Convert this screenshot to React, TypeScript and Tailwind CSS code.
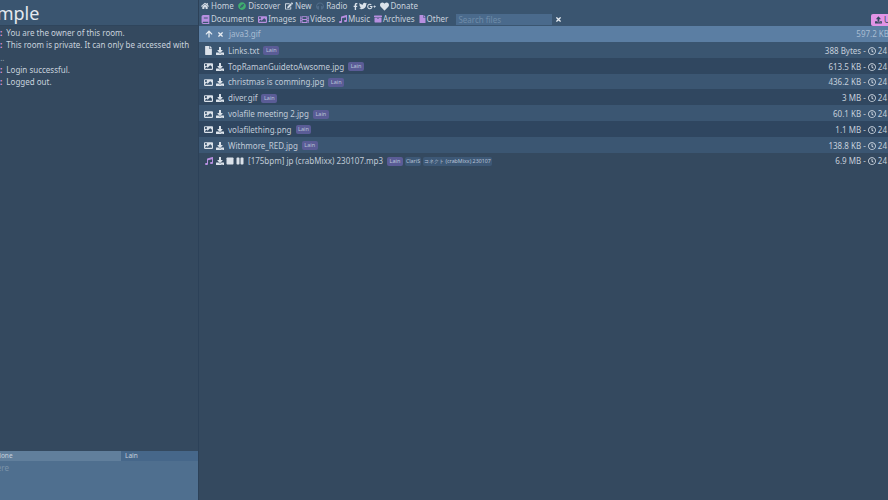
import {
  FaHome,
  FaCompass,
  FaEdit,
  FaHeadphones,
  FaFacebookF,
  FaTwitter,
  FaGooglePlusG,
  FaHeart,
  FaBook,
  FaImage,
  FaFilm,
  FaMusic,
  FaArchive,
  FaFile,
  FaTimes,
  FaArrowUp,
  FaDownload,
  FaUpload,
  FaStop,
  FaPause,
  FaRegClock,
} from "react-icons/fa";
import type { IconType } from "react-icons";

const messages = [
  { text: "You are the owner of this room." },
  { text: "This room is private. It can only be accessed with", more: "..." },
  { text: "Login successful." },
  { text: "Logged out." },
];

const nav: { icon: IconType; label: string; color: string }[] = [
  { icon: FaHome, label: "Home", color: "text-[#d5dde6]" },
  { icon: FaCompass, label: "Discover", color: "text-[#3fae6f]" },
  { icon: FaEdit, label: "New", color: "text-[#d5dde6]" },
  { icon: FaHeadphones, label: "Radio", color: "text-[#4f6b88]" },
];

const filters: { icon: IconType; label: string; size: string }[] = [
  { icon: FaBook, label: "Documents", size: "w-[9px] h-[9px]" },
  { icon: FaImage, label: "Images", size: "w-[9px] h-[9px]" },
  { icon: FaFilm, label: "Videos", size: "w-[9px] h-[9px]" },
  { icon: FaMusic, label: "Music", size: "w-[8px] h-[8px]" },
  { icon: FaArchive, label: "Archives", size: "w-[8px] h-[8px]" },
  { icon: FaFile, label: "Other", size: "w-[7px] h-[8px]" },
];

const files = [
  { name: "Links.txt", size: "388 Bytes", icon: FaFile, bg: "bg-[#3a5570]" },
  { name: "TopRamanGuidetoAwsome.jpg", size: "613.5 KB", icon: FaImage, bg: "bg-[#304760]" },
  { name: "christmas is comming.jpg", size: "436.2 KB", icon: FaImage, bg: "bg-[#3b5672]" },
  { name: "diver.gif", size: "3 MB", icon: FaImage, bg: "bg-[#304760]" },
  { name: "volafile meeting 2.jpg", size: "60.1 KB", icon: FaImage, bg: "bg-[#3b5672]" },
  { name: "volafilething.png", size: "1.1 MB", icon: FaImage, bg: "bg-[#2f4660]" },
  { name: "Withmore_RED.jpg", size: "138.8 KB", icon: FaImage, bg: "bg-[#3b5672]" },
];

function Tag({ children }: { children: string }) {
  return (
    <span className="ml-[4px] px-[2.5px] text-[5.5px] leading-[9px] rounded-[2px] text-[#b9c4d8] bg-[#5a5c96] whitespace-nowrap">
      {children}
    </span>
  );
}

function PlainTag({ children }: { children: string }) {
  return (
    <span className="ml-[2px] px-[1px] text-[5.3px] leading-[9px] rounded-[2px] text-[#b9c4d8] bg-[#3d5876] whitespace-nowrap">
      {children}
    </span>
  );
}

function FileRow({ name, size, icon: Icon, bg }: (typeof files)[number]) {
  return (
    <div className={`h-[15.8px] flex items-center pt-[2px] pl-[5px] pr-[5px] ${bg}`}>
      <Icon className="w-[9px] h-[9px] text-[#dbe2ea] mr-[3px] shrink-0" />
      <FaDownload className="w-[8px] h-[8px] text-[#dbe2ea] mr-[4px] shrink-0" />
      <span className="text-[#c0cbd8]">{name}</span>
      <Tag>Lain</Tag>
      <Size size={size} />
    </div>
  );
}

function Size({ size }: { size: string }) {
  return (
    <span className="ml-auto flex items-center text-[#c5cfdb] whitespace-nowrap">
      {size} -
      <FaRegClock className="w-[8px] h-[8px] mx-[2px] text-[#dbe2ea]" />
      24 h
    </span>
  );
}

export default function App() {
  return (
    <div
      className="w-[888px] h-[500px] overflow-hidden flex bg-[#34495f] text-[8px] leading-[12px]"
      style={{ fontFamily: '"Noto Sans", "Open Sans", sans-serif' }}
    >
      <aside className="w-[199px] shrink-0 flex flex-col border-r border-[#2c4158] overflow-hidden">
        <div className="h-[26px] shrink-0 bg-[#3a5570] border-b border-[#2f455c] overflow-hidden">
          <h1 className="ml-[-33px] text-[18px] leading-[27px] text-[#e4e9ef] whitespace-nowrap">
            Example
          </h1>
        </div>
        <div className="flex-1 pt-[1px] text-[#c8d2dd]">
          {messages.map((m) => (
            <div key={m.text}>
              <p className="h-[12.3px] whitespace-nowrap">
                <span className="text-[#e79ee8] font-bold mr-[2px]">:</span> {m.text}
              </p>
              {m.more && <p className="h-[12.3px] -ml-[2px] text-[#8fa0b2]">{m.more}</p>}
            </div>
          ))}
        </div>
        <div className="h-[49px] shrink-0 bg-[#4f6f8f]">
          <div className="h-[10px] flex text-[6.5px] leading-[10px] text-[#c6d1dc] bg-[#46678a]">
            <span className="w-[121px] bg-[#617f9c] overflow-hidden whitespace-nowrap">
              <span className="-ml-[4px] inline-block">None</span>
            </span>
            <span className="ml-[4px]">Lain</span>
          </div>
          <div className="mt-[1px] -ml-[28px] text-[#7b93aa]">Type here</div>
        </div>
      </aside>

      <main className="w-[700px] shrink-0 flex flex-col">
        <div className="h-[26px] shrink-0 bg-[#3a5570] pl-[2px] relative">
          <div className="h-[12px] flex items-center gap-[4.5px] text-[#c8d2dd]">
            {nav.map(({ icon: Icon, label, color }) => (
              <span key={label} className="flex items-center gap-[2px]">
                <Icon className={`w-[8px] h-[8px] ${color}`} />
                {label}
              </span>
            ))}
            <span className="flex items-center text-[#dbe2ea]">
              <FaFacebookF className="w-[7px] h-[7px]" />
              <FaTwitter className="w-[8px] h-[8px]" />
              <FaGooglePlusG className="w-[9px] h-[9px]" />
            </span>
            <span className="flex items-center gap-[1px]">
              <FaHeart className="w-[9px] h-[9px] text-[#dbe2ea]" />
              Donate
            </span>
          </div>
          <div className="h-[14px] flex items-center gap-[4px] text-[#c8d2dd]">
            {filters.map(({ icon: Icon, label, size }) => (
              <span key={label} className="flex items-center gap-[1px]">
                <Icon className={`${size} text-[#b78fe0]`} />
                {label}
              </span>
            ))}
            <span className="ml-[4px] w-[96px] h-[11px] bg-[#4a6a8c] text-[#6f8ca9] pl-[2px] leading-[11px]">
              Search files
            </span>
            <FaTimes className="w-[7px] h-[7px] -ml-[1px] text-[#e8edf2]" />
          </div>
          <button className="absolute left-[672px] top-[14px] h-[12px] w-[40px] bg-[#e294e6] rounded-[2px] pl-[4px] flex items-center gap-[2px] text-[#33495f]">
            <FaUpload className="w-[8px] h-[8px]" />
            Upload
          </button>
        </div>

        <div className="h-[16px] flex items-center pl-[6px] pr-[6px] bg-[#5b7ea3]">
          <FaArrowUp className="w-[8px] h-[8px] text-[#e8edf2] mr-[4px]" />
          <FaTimes className="w-[7px] h-[7px] text-[#e8edf2] mr-[5px]" />
          <span className="text-[#a9bdd2]">java3.gif</span>
          <span className="ml-auto mr-[4px] text-[#a9bdd2]">597.2 KB</span>
        </div>
        {files.map((f) => (
          <FileRow key={f.name} {...f} />
        ))}
        <div className="h-[15.8px] flex items-center pt-[2px] pl-[6px] pr-[5px]">
          <FaMusic className="w-[8px] h-[8px] text-[#b78fe0] mr-[3px]" />
          <FaDownload className="w-[8px] h-[8px] text-[#dbe2ea] mr-[2px]" />
          <FaStop className="w-[8px] h-[8px] text-[#dbe2ea] mr-[2px]" />
          <FaPause className="w-[8px] h-[8px] text-[#dbe2ea] mr-[4px]" />
          <span className="text-[#c0cbd8]">[175bpm] jp (crabMixx) 230107.mp3</span>
          <Tag>Lain</Tag>
          <PlainTag>ClariS</PlainTag>
          <PlainTag>コネクト (crabMixx) 230107</PlainTag>
          <Size size="6.9 MB" />
        </div>
      </main>
    </div>
  );
}
